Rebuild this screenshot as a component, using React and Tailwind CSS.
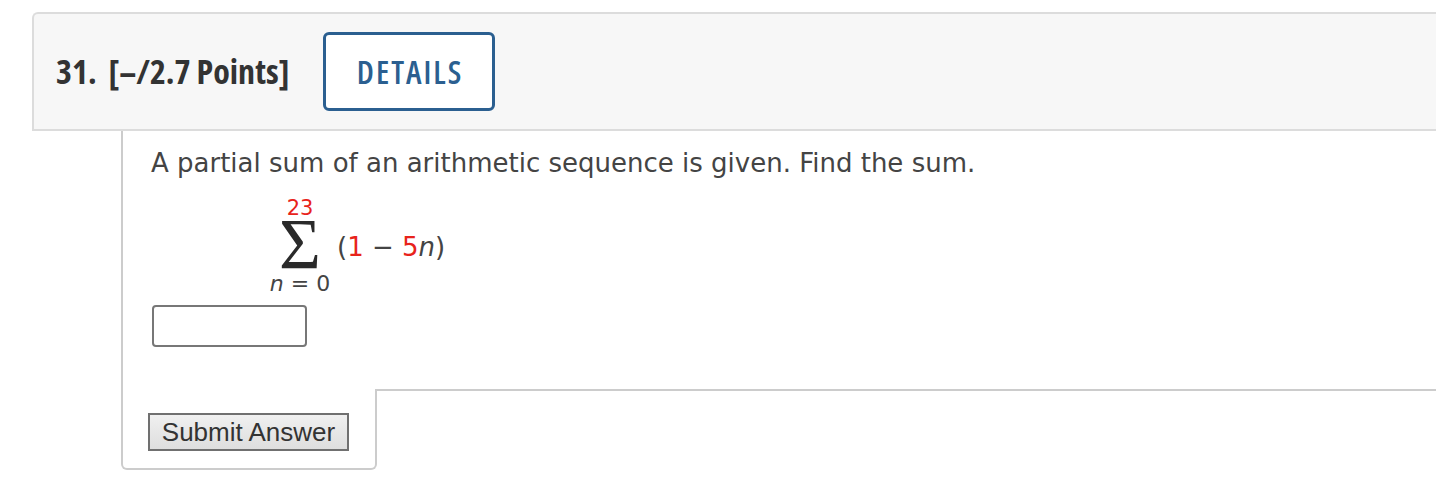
import React from 'react';

const App = () => {
    return (
        <div className="min-h-screen w-[1436px] bg-white pt-3 pl-8">
            <div className="flex h-[119px] items-center rounded-tl-md border-2 border-r-0 border-[#dcdcdc] bg-[#f7f7f7] pl-[22px] font-['Open_Sans',sans-serif] [font-stretch:75%]">
                <span className="whitespace-pre text-[34px] font-bold text-[#333]">31.  [–/2.7 Points]</span>
                <button className="ml-[34px] flex h-[79px] w-[172px] items-center justify-center rounded-md border-[3px] border-[#2b5f90] bg-white pl-[2px] text-[32px] font-semibold tracking-[2px] text-[#2b5f90]">
                    DETAILS
                </button>
            </div>

            <div className="ml-[89px] flex flex-col">
                <div className="border-l-2 border-[#cccccc] pt-[17px] pl-7 font-['DejaVu_Sans',sans-serif] text-[#444]">
                    <p className="text-[26px] leading-[30px]">A partial sum of an arithmetic sequence is given. Find the sum.</p>

                    <div className="mt-[20px] ml-[118px] flex items-center">
                        <div className="flex w-[62px] flex-col items-center">
                            <span className="text-[21px] leading-none text-[#e8231b]">23</span>
                            <span className="mt-[3px] font-['Liberation_Serif',serif] text-[72px] leading-[44px] text-[#2a2a2a]">Σ</span>
                            <span className="mt-[7px] whitespace-nowrap text-[22px] leading-none"><i>n</i> = 0</span>
                        </div>
                        <span className="ml-[6px] whitespace-nowrap text-[26px] leading-[30px]">
                            (<span className="text-[#e8231b]">1</span> − <span className="text-[#e8231b]">5</span><i>n</i>)
                        </span>
                    </div>

                    <input type="text" className="mt-[10px] ml-[1px] block h-[42px] w-[155px] rounded-[4px] border-2 border-[#777] bg-white" />
                    <div className="h-[42px]" />
                </div>

                <div className="flex">
                    <div className="h-[81px] w-[256px] rounded-b-md border-2 border-t-0 border-[#cccccc] pt-[24px] pl-[25px]">
                        <button className="h-[38px] w-[201px] border-2 border-[#707070] bg-gradient-to-b from-[#f0f0f0] to-[#dedede] font-['Liberation_Sans',sans-serif] text-[26px] leading-none text-[#333]">
                            Submit Answer
                        </button>
                    </div>
                    <div className="flex-1 border-t-2 border-[#cccccc]" />
                </div>
            </div>
        </div>
    );
};

export default App;
